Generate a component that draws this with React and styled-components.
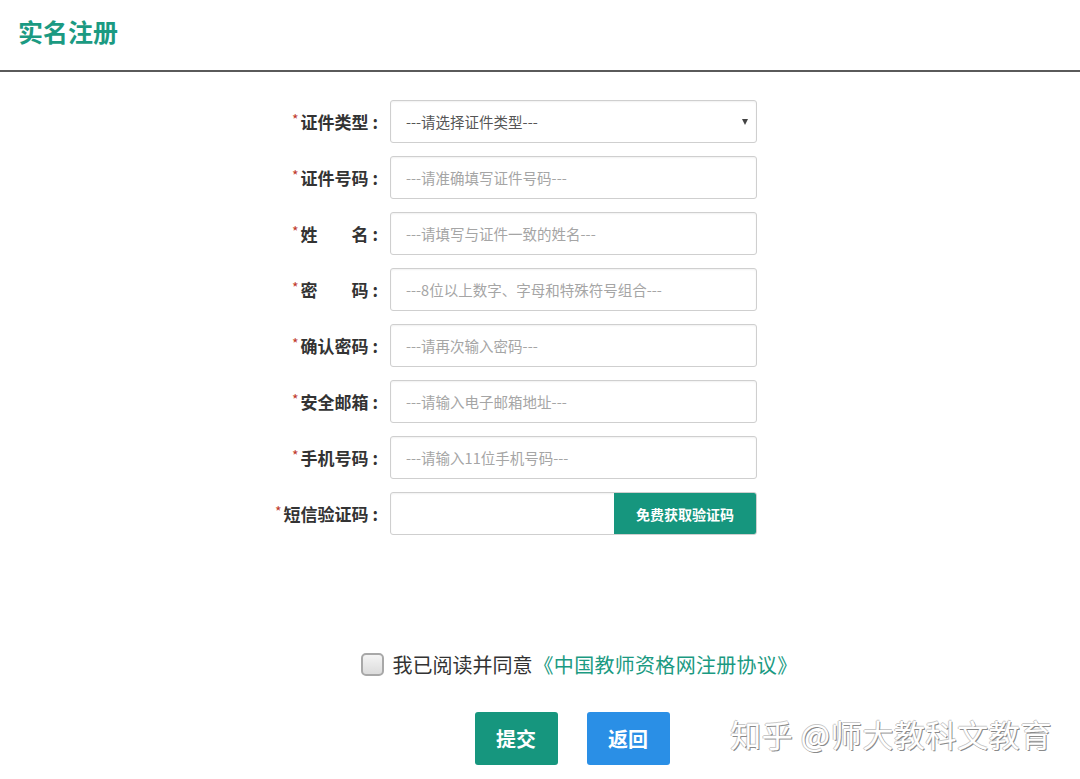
import React from "react";
import styled, { createGlobalStyle } from "styled-components";

const GlobalStyle = createGlobalStyle`
  html, body {
    margin: 0;
    padding: 0;
    background: #fff;
    font-family: "Microsoft YaHei", "Noto Sans CJK SC", sans-serif;
  }
`;

const Page = styled.div`
  position: relative;
  width: 1080px;
  height: 779px;
  overflow: hidden;
  background: #fff;
`;

const Header = styled.div`
  height: 72px;
  border-bottom: 2px solid #5a5a5a;
  padding: 14px 0 0 18px;
  box-sizing: border-box;
`;

const Title = styled.h1`
  margin: 0;
  font-size: 25px;
  line-height: 34px;
  font-weight: 700;
  color: #1b9a82;
`;

const Form = styled.div`
  display: grid;
  grid-template-columns: 110px 367px;
  column-gap: 10px;
  row-gap: 13px;
  margin: 28px 0 0 270px;
`;

const Label = styled.label`
  display: flex;
  align-items: center;
  justify-content: flex-end;
  height: 43px;
  font-size: 17px;
  font-weight: 700;
  color: #333;
  white-space: pre;
`;

const Colon = styled.span`
  margin-left: 4px;
  margin-right: 2px;
`;

const Star = styled.span`
  color: #c0392b;
  font-size: 14px;
  font-weight: 400;
  margin-right: 2px;
  transform: translateY(-3px);
`;

const Field = styled.div`
  position: relative;
  display: flex;
  height: 43px;
  box-sizing: border-box;
  border: 1px solid #cfcfcf;
  border-radius: 3px;
  box-shadow: inset 0 1px 2px rgba(0, 0, 0, 0.06);
  background: #fff;
  overflow: hidden;
`;

const Input = styled.input`
  flex: 1;
  min-width: 0;
  border: none;
  outline: none;
  padding: 0 15px;
  font-family: inherit;
  font-size: 14.5px;
  color: #333;
  background: transparent;

  &::placeholder {
    color: ${(p) => (p.$dark ? "#555" : "#a5a5a5")};
  }
`;

const Caret = styled.span`
  position: absolute;
  right: 8px;
  top: 18px;
  width: 0;
  height: 0;
  border-left: 3.5px solid transparent;
  border-right: 3.5px solid transparent;
  border-top: 6px solid #444;
`;

const CodeButton = styled.button`
  width: 142px;
  border: none;
  background: #16967e;
  color: #fff;
  font-family: inherit;
  font-size: 14px;
  font-weight: 700;
  cursor: pointer;
`;

const Footer = styled.div`
  display: flex;
  flex-direction: column;
  align-items: center;
  padding-left: 78px;
  margin-top: 115px;
`;

const Agreement = styled.div`
  display: flex;
  align-items: center;
  font-size: 20px;
  color: #333;
  height: 28px;
`;

const Box = styled.span`
  width: 23px;
  height: 23px;
  box-sizing: border-box;
  border: 2px solid #a8a8a8;
  border-radius: 5px;
  background: linear-gradient(#f4f4f4, #dcdcdc);
  margin-right: 9px;
`;

const Link = styled.a`
  color: #1b9a82;
  text-decoration: none;
  margin-left: 1px;
  letter-spacing: 0.3px;
`;

const Buttons = styled.div`
  display: flex;
  gap: 29px;
  margin-top: 34px;
  margin-left: -14px;
`;

const ActionButton = styled.button`
  width: 83px;
  height: 53px;
  border: none;
  border-radius: 3px;
  background: ${(p) => p.$bg};
  color: #fff;
  font-family: inherit;
  font-size: 20px;
  font-weight: 700;
  cursor: pointer;
`;

const Watermark = styled.div`
  position: absolute;
  right: 28px;
  bottom: 23px;
  font-size: 31px;
  letter-spacing: 0.6px;
  color: #fff;
  text-shadow: 1px 1px 0 #8a8a8a, -1px 0 0 #c8c8c8, 0 -1px 0 #c8c8c8;
`;

const rows = [
  { label: "证件类型", placeholder: "---请选择证件类型---", select: true },
  { label: "证件号码", placeholder: "---请准确填写证件号码---" },
  { label: "姓　　名", placeholder: "---请填写与证件一致的姓名---" },
  { label: "密　　码", placeholder: "---8位以上数字、字母和特殊符号组合---", type: "password" },
  { label: "确认密码", placeholder: "---请再次输入密码---", type: "password" },
  { label: "安全邮箱", placeholder: "---请输入电子邮箱地址---" },
  { label: "手机号码", placeholder: "---请输入11位手机号码---" },
];

export default function App() {
  return (
    <Page>
      <GlobalStyle />
      <Header>
        <Title>实名注册</Title>
      </Header>

      <Form>
        {rows.map((r) => (
          <React.Fragment key={r.label}>
            <Label>
              <Star>*</Star>
              {r.label}
              <Colon>:</Colon>
            </Label>
            <Field>
              <Input
                type={r.type || "text"}
                placeholder={r.placeholder}
                $dark={r.select}
                readOnly={r.select}
              />
              {r.select && <Caret />}
            </Field>
          </React.Fragment>
        ))}
        <Label>
          <Star>*</Star>
          短信验证码
          <Colon>:</Colon>
        </Label>
        <Field>
          <Input type="text" />
          <CodeButton>免费获取验证码</CodeButton>
        </Field>
      </Form>

      <Footer>
        <Agreement>
          <Box />
          我已阅读并同意
          <Link href="#">《中国教师资格网注册协议》</Link>
        </Agreement>
        <Buttons>
          <ActionButton $bg="#16967e">提交</ActionButton>
          <ActionButton $bg="#2a8fe6">返回</ActionButton>
        </Buttons>
      </Footer>

      <Watermark>知乎 @师大教科文教育</Watermark>
    </Page>
  );
}
